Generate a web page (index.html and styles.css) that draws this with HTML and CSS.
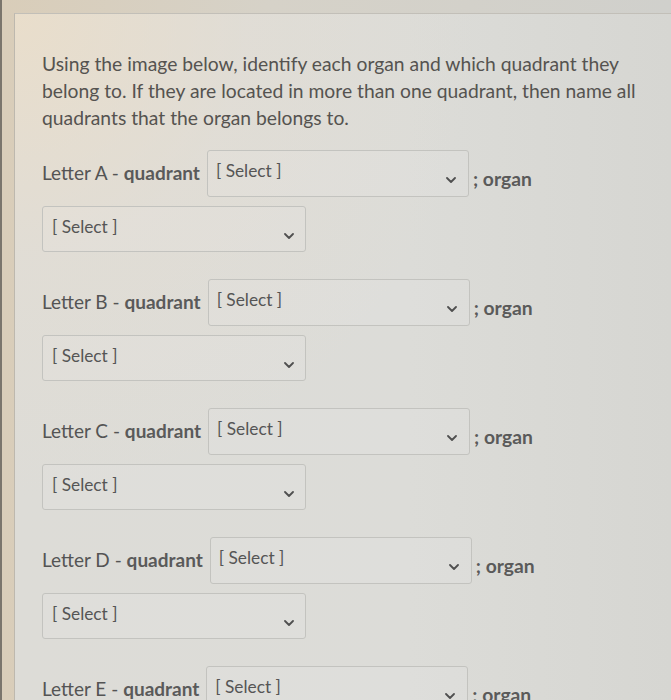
FILE: index.html
```
<!DOCTYPE html>
<html lang="en">
<head>
<meta charset="utf-8">
<title>Quiz question</title>
<link rel="stylesheet" href="styles.css">
</head>
<body>
<div class="frame">
  <div class="content">
    <p class="intro">Using the image below, identify each organ and which quadrant they belong to. If they are located in more than one quadrant, then name all quadrants that the organ belongs to.</p>

    <div class="item">
      <div class="line">
        <span class="label">Letter A - <b>quadrant</b></span>
        <div class="select wide"><span class="sel-text">[ Select ]</span><svg class="chev" viewBox="0 0 10 6" width="10" height="6"><polyline points="1,1 5,5 9,1"/></svg></div>
        <span class="organ">; organ</span>
      </div>
      <div class="select narrow"><span class="sel-text">[ Select ]</span><svg class="chev" viewBox="0 0 10 6" width="10" height="6"><polyline points="1,1 5,5 9,1"/></svg></div>
    </div>

    <div class="item">
      <div class="line">
        <span class="label">Letter B - <b>quadrant</b></span>
        <div class="select wide"><span class="sel-text">[ Select ]</span><svg class="chev" viewBox="0 0 10 6" width="10" height="6"><polyline points="1,1 5,5 9,1"/></svg></div>
        <span class="organ">; organ</span>
      </div>
      <div class="select narrow"><span class="sel-text">[ Select ]</span><svg class="chev" viewBox="0 0 10 6" width="10" height="6"><polyline points="1,1 5,5 9,1"/></svg></div>
    </div>

    <div class="item">
      <div class="line">
        <span class="label">Letter C - <b>quadrant</b></span>
        <div class="select wide"><span class="sel-text">[ Select ]</span><svg class="chev" viewBox="0 0 10 6" width="10" height="6"><polyline points="1,1 5,5 9,1"/></svg></div>
        <span class="organ">; organ</span>
      </div>
      <div class="select narrow"><span class="sel-text">[ Select ]</span><svg class="chev" viewBox="0 0 10 6" width="10" height="6"><polyline points="1,1 5,5 9,1"/></svg></div>
    </div>

    <div class="item">
      <div class="line">
        <span class="label">Letter D - <b>quadrant</b></span>
        <div class="select wide"><span class="sel-text">[ Select ]</span><svg class="chev" viewBox="0 0 10 6" width="10" height="6"><polyline points="1,1 5,5 9,1"/></svg></div>
        <span class="organ">; organ</span>
      </div>
      <div class="select narrow"><span class="sel-text">[ Select ]</span><svg class="chev" viewBox="0 0 10 6" width="10" height="6"><polyline points="1,1 5,5 9,1"/></svg></div>
    </div>

    <div class="item">
      <div class="line">
        <span class="label">Letter E - <b>quadrant</b></span>
        <div class="select wide"><span class="sel-text">[ Select ]</span><svg class="chev" viewBox="0 0 10 6" width="10" height="6"><polyline points="1,1 5,5 9,1"/></svg></div>
        <span class="organ">; organ</span>
      </div>
      <div class="select narrow"><span class="sel-text">[ Select ]</span><svg class="chev" viewBox="0 0 10 6" width="10" height="6"><polyline points="1,1 5,5 9,1"/></svg></div>
    </div>
  </div>
</div>
</body>
</html>
```

FILE: styles.css
```
html, body {
  margin: 0;
  padding: 0;
  height: 100%;
  overflow: hidden;
}

body {
  background: linear-gradient(90deg, #d9cdb9 0%, #d6d2c8 40%, #d0d0cc 100%);
  font-family: Lato, "Open Sans", "Liberation Sans", sans-serif;
  color: #545454;
  border-left: 2px solid #7a756c;
  box-sizing: border-box;
}

.frame {
  margin-left: 12px;
  padding-top: 13px;
  height: 100%;
  box-sizing: border-box;
}

.content {
  height: 100%;
  box-sizing: border-box;
  border-left: 1px solid #bdb8ae;
  border-top: 1px solid #c2bfb8;
  background:
    radial-gradient(ellipse at 0% 0%, rgba(236, 222, 200, 0.8) 0%, rgba(230, 222, 210, 0.4) 25%, rgba(222, 221, 217, 0) 50%),
    linear-gradient(90deg, #dddcd7 0%, #dcdcd8 60%, #d6d6d2 100%);
  padding: 36px 20px 0 27px;
}

.intro {
  margin: 0;
  font-size: 19.3px;
  line-height: 27px;
  color: #555350;
  width: 600px;
}

.item {
  margin-top: 19px;
}

.item + .item {
  margin-top: 27px;
}

.line {
  display: flex;
  align-items: flex-start;
}

.label {
  font-size: 19px;
  line-height: 22px;
  margin-top: 12px;
  margin-right: 7px;
  color: #545454;
  white-space: nowrap;
}

.label b {
  font-weight: 700;
  color: #5a5a5a;
}

.organ {
  font-size: 19.3px;
  line-height: 22px;
  font-weight: 700;
  margin-top: 18px;
  margin-left: 4px;
  color: #5a5a5a;
  white-space: nowrap;
}

.select {
  box-sizing: border-box;
  height: 47px;
  border: 1px solid #c3c3bf;
  border-radius: 3px;
  background: rgba(255, 255, 255, 0.08);
  display: flex;
  align-items: flex-start;
  justify-content: space-between;
  padding: 9px 12px 0 8px;
  flex: none;
}

.wide {
  width: 262px;
}

.narrow {
  width: 264px;
  height: 46px;
  margin-top: 9px;
  padding-left: 9px;
  padding-right: 11px;
}

.sel-text {
  font-size: 17.3px;
  line-height: 22px;
  color: #555555;
}

.chev {
  margin-top: 17px;
  fill: none;
  stroke: #4f4f4f;
  stroke-width: 1.8;
  stroke-linecap: round;
  stroke-linejoin: round;
}
```
